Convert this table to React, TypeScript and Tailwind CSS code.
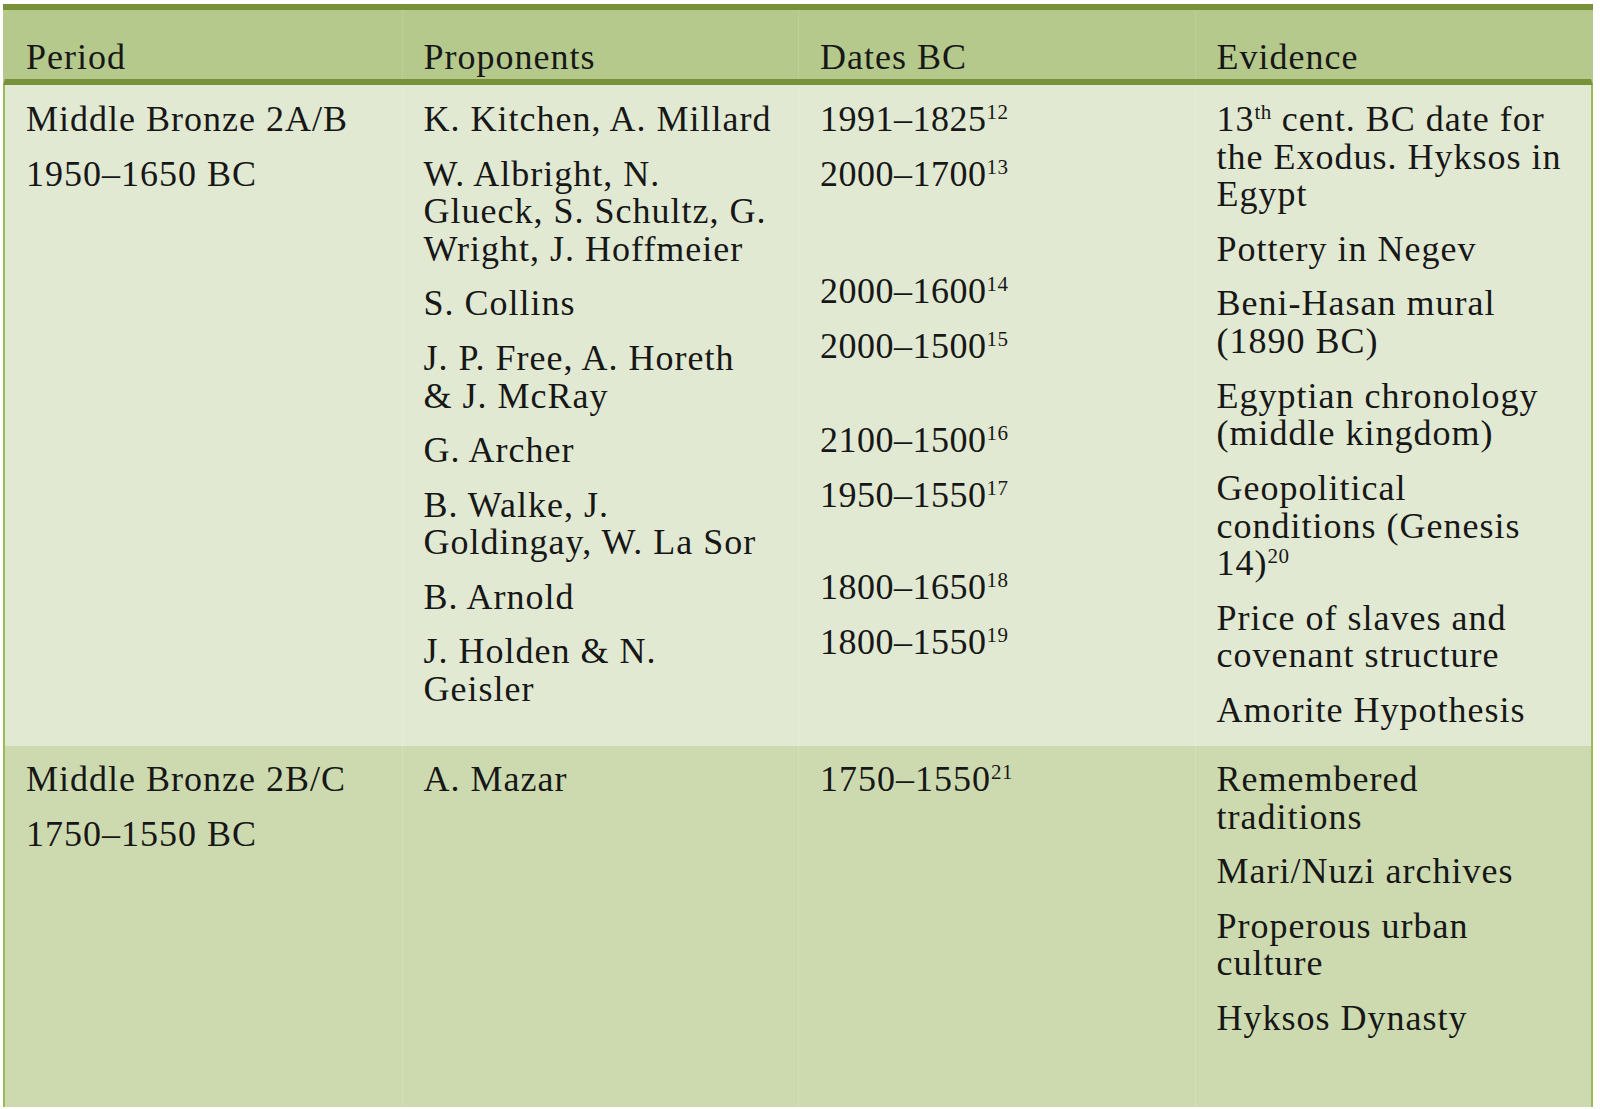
import React from "react";

const Sup = ({ children }: { children: React.ReactNode }) => (
  <span className="relative top-[-12px] text-[21px] leading-none tracking-[0.5px]">{children}</span>
);

const Para = ({ lines, className = "" }: { lines: React.ReactNode[]; className?: string }) => (
  <div className={className}>
    {lines.map((l, i) => (
      <div key={i} className="whitespace-nowrap">
        {l}
      </div>
    ))}
  </div>
);

export default function App() {
  const dates: [string, string, number][] = [
    ["1991–1825", "12", 0],
    ["2000–1700", "13", 17],
    ["2000–1600", "14", 80],
    ["2000–1500", "15", 17],
    ["2100–1500", "16", 56],
    ["1950–1550", "17", 17],
    ["1800–1650", "18", 55],
    ["1800–1550", "19", 17],
  ];

  const proponents: string[][] = [
    ["K. Kitchen, A. Millard"],
    ["W. Albright, N.", "Glueck, S. Schultz, G.", "Wright, J. Hoffmeier"],
    ["S. Collins"],
    ["J. P. Free, A. Horeth", "& J. McRay"],
    ["G. Archer"],
    ["B. Walke, J.", "Goldingay, W. La Sor"],
    ["B. Arnold"],
    ["J. Holden & N.", "Geisler"],
  ];

  const evidence1: React.ReactNode[][] = [
    [
      <>
        13<Sup>th</Sup> cent. BC date for
      </>,
      "the Exodus. Hyksos in",
      "Egypt",
    ],
    ["Pottery in Negev"],
    ["Beni-Hasan mural", "(1890 BC)"],
    ["Egyptian chronology", "(middle kingdom)"],
    [
      "Geopolitical",
      "conditions (Genesis",
      <>
        14)<Sup>20</Sup>
      </>,
    ],
    ["Price of slaves and", "covenant structure"],
    ["Amorite Hypothesis"],
  ];

  const evidence2: string[][] = [
    ["Remembered", "traditions"],
    ["Mari/Nuzi archives"],
    ["Properous urban", "culture"],
    ["Hyksos Dynasty"],
  ];

  const cell = "pl-[21px] pr-[4px] overflow-visible";

  return (
    <div
      className="w-[1600px] h-[1109px] bg-white pt-[4px] pl-[3px] text-[#171717] text-[36px] leading-[37.7px] tracking-[1px] overflow-hidden"
      style={{ fontFamily: '"Liberation Serif", "Times New Roman", serif' }}
    >
      <div className="w-[1590px] border-t-[6px] border-[#77923b]">
        {/* Header */}
        <div className="grid grid-cols-4 h-[75px] bg-[#b5c98d] border-b-[6px] border-[#77923b] border-x-2 border-x-[#b5c98d]">
          <div className={`${cell} pt-[29px]`}>Period</div>
          <div className={`${cell} pt-[29px] border-l border-[#bccf98]`}>Proponents</div>
          <div className={`${cell} pt-[29px] border-l border-[#bccf98]`}>Dates BC</div>
          <div className={`${cell} pt-[29px] border-l border-[#bccf98]`}>Evidence</div>
        </div>

        {/* Row 1 */}
        <div className="grid grid-cols-4 h-[661px] bg-[#e1e9d2] border-x-2 border-[#9bbb59]">
          <div className={`${cell} pt-[16px] flex flex-col gap-[16.8px]`}>
            <Para lines={["Middle Bronze 2A/B"]} />
            <Para lines={["1950–1650 BC"]} />
          </div>
          <div className={`${cell} pt-[16px] flex flex-col gap-[16.8px] border-l border-[#e7eddc]`}>
            {proponents.map((p, i) => (
              <Para key={i} lines={p} />
            ))}
          </div>
          <div className={`${cell} pt-[16px] flex flex-col border-l border-[#e7eddc]`}>
            {dates.map(([d, s, mt], i) => (
              <div key={i} className="whitespace-nowrap tracking-[0.5px]" style={{ marginTop: mt }}>
                {d}
                <Sup>{s}</Sup>
              </div>
            ))}
          </div>
          <div className={`${cell} pt-[16px] flex flex-col gap-[16.8px] border-l border-[#e7eddc]`}>
            {evidence1.map((p, i) => (
              <Para key={i} lines={p} />
            ))}
          </div>
        </div>

        {/* Row 2 */}
        <div className="grid grid-cols-4 h-[361px] bg-[#cddab0] border-x-2 border-[#9bbb59]">
          <div className={`${cell} pt-[15px] flex flex-col gap-[16.8px]`}>
            <Para lines={["Middle Bronze 2B/C"]} />
            <Para lines={["1750–1550 BC"]} />
          </div>
          <div className={`${cell} pt-[15px] border-l border-[#d4dfba]`}>
            <Para lines={["A. Mazar"]} />
          </div>
          <div className={`${cell} pt-[15px] border-l border-[#d4dfba]`}>
            <div className="whitespace-nowrap">
              1750–1550<Sup>21</Sup>
            </div>
          </div>
          <div className={`${cell} pt-[15px] flex flex-col gap-[16.8px] border-l border-[#d4dfba]`}>
            {evidence2.map((p, i) => (
              <Para key={i} lines={p} />
            ))}
          </div>
        </div>
      </div>
    </div>
  );
}
